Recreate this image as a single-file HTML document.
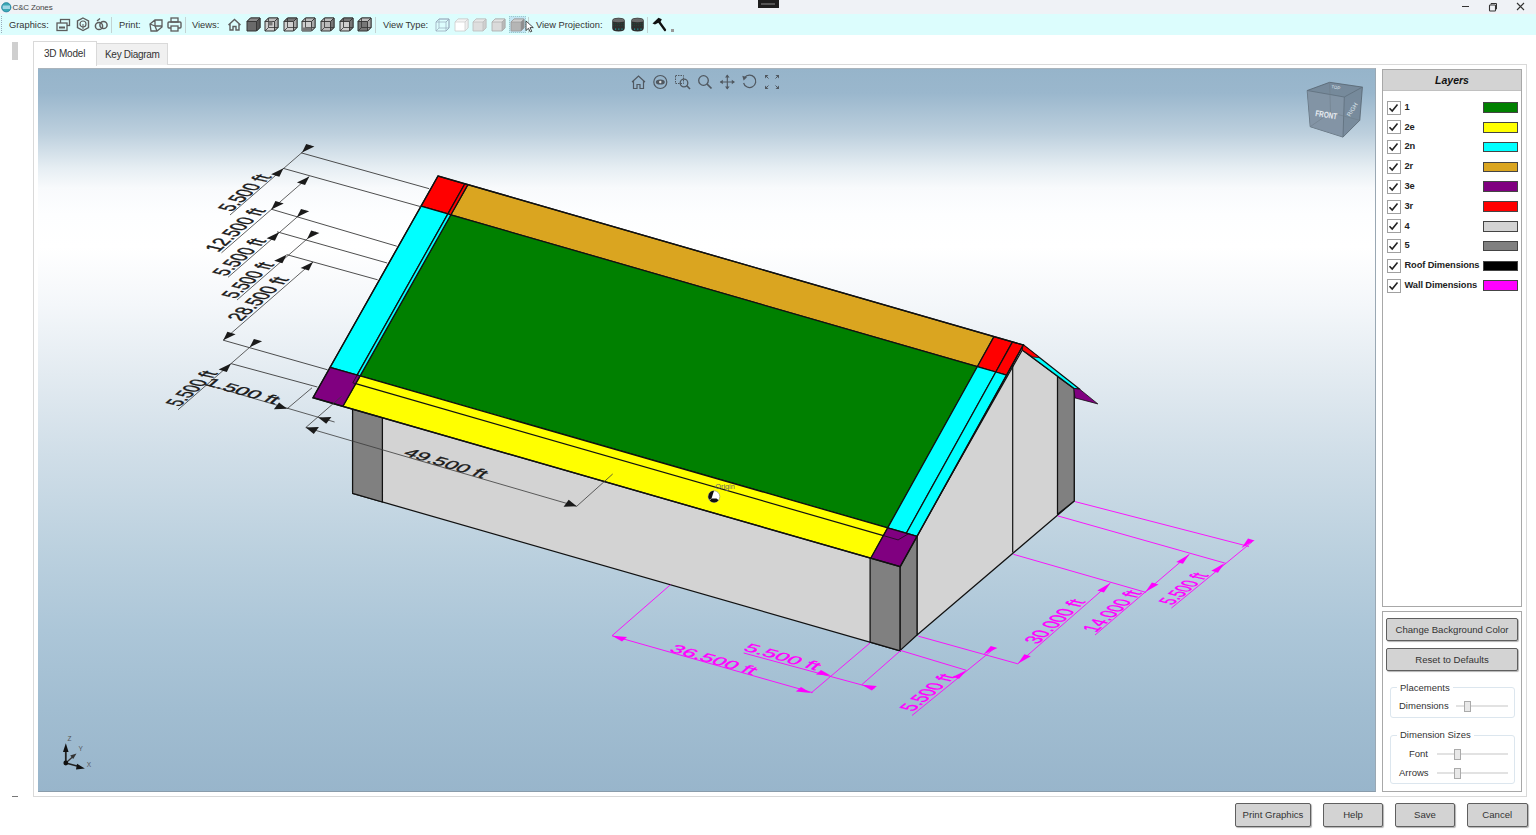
<!DOCTYPE html>
<html><head><meta charset="utf-8"><style>*{box-sizing:border-box;margin:0;padding:0}
html,body{width:1536px;height:835px;overflow:hidden;background:#fff;font-family:"Liberation Sans",sans-serif;color:#222}
body{position:relative}
.a{position:absolute}
.tl{font-size:9.3px;color:#333;top:20.5px;white-space:nowrap;line-height:1}
.btn{background:#d3d3d3;border:1px solid #5f5f5f;border-radius:2px;box-shadow:1px 1px 1px rgba(0,0,0,.3);font-size:9.6px;color:#333;text-align:center;white-space:nowrap}
</style></head><body>
<div class="a" style="left:0;top:0;width:1536px;height:14px;background:#eff2f6"></div>
<svg class="a" style="left:1px;top:2px" width="11" height="11" viewBox="0 0 11 11"><circle cx="5.3" cy="5.3" r="4.8" fill="#3aa9b5"/><rect x="1.5" y="3.5" width="7.5" height="3.5" fill="#9fd6e6"/><circle cx="5.3" cy="5.3" r="4.6" fill="none" stroke="#2a7fa0" stroke-width="0.8"/></svg>
<div class="a" style="left:12.5px;top:2.5px;font-size:8px;color:#444;white-space:nowrap;letter-spacing:-0.15px">C&amp;C Zones</div>
<div class="a" style="left:757.5px;top:0;width:21.5px;height:7.5px;background:#1e1e1e"></div><div class="a" style="left:761px;top:3px;width:14px;height:1.5px;background:#555"></div>
<div class="a" style="left:1462px;top:6px;width:7px;height:1px;background:#333"></div>
<svg class="a" style="left:1488px;top:2px" width="10" height="10" viewBox="0 0 10 10"><path d="M3 2.5V1.5H8.5V7H7.5" fill="none" stroke="#333" stroke-width="1"/><rect x="1.5" y="3" width="6" height="6" rx="0.8" fill="none" stroke="#333" stroke-width="1.1"/></svg>
<svg class="a" style="left:1516px;top:2px" width="9" height="9" viewBox="0 0 9 9"><path d="M1 1L8 8M8 1L1 8" stroke="#333" stroke-width="1.1"/></svg>
<div class="a" style="left:0;top:14px;width:1536px;height:21px;background:#dcfdfd"></div>
<div class="a" style="left:1px;top:16px;width:1px;height:17px;border-left:1px dotted #9ab"></div>
<div class="a tl" style="left:9px">Graphics:</div>
<div class="a tl" style="left:119px">Print:</div>
<div class="a tl" style="left:192px">Views:</div>
<div class="a tl" style="left:383px">View Type:</div>
<div class="a tl" style="left:536px">View Projection:</div>
<div class="a" style="left:111px;top:17px;width:1px;height:16px;background:#c3d3d3"></div>
<div class="a" style="left:185px;top:17px;width:1px;height:16px;background:#c3d3d3"></div>
<div class="a" style="left:375px;top:17px;width:1px;height:16px;background:#c3d3d3"></div>
<div class="a" style="left:528px;top:17px;width:1px;height:16px;background:#c3d3d3"></div>
<div class="a" style="left:647px;top:17px;width:1px;height:16px;background:#c3d3d3"></div>
<svg class="a" style="left:56px;top:18px" width="15" height="14" viewBox="0 0 15 14"><rect x="4.5" y="1.5" width="9" height="6" fill="none" stroke="#5d5d5d" stroke-width="1.3"/><rect x="1" y="5" width="10" height="7.5" fill="#dcfdfd" stroke="#5d5d5d" stroke-width="1.3"/><rect x="3" y="8.5" width="6" height="2" fill="#5d5d5d"/></svg>
<svg class="a" style="left:76px;top:17px" width="14" height="15" viewBox="0 0 14 15"><path d="M7 1L12.5 4V10.5L7 13.5L1.5 10.5V4Z" fill="none" stroke="#5d5d5d" stroke-width="1.4"/><circle cx="7" cy="7" r="3" fill="none" stroke="#5d5d5d" stroke-width="1.2"/><path d="M7 7V12" stroke="#5d5d5d" stroke-width="1"/></svg>
<svg class="a" style="left:94px;top:17px" width="15" height="15" viewBox="0 0 15 15"><circle cx="5" cy="9" r="3.6" fill="none" stroke="#5d5d5d" stroke-width="1.5"/><circle cx="9.5" cy="8" r="3.6" fill="none" stroke="#5d5d5d" stroke-width="1.5"/><path d="M3 4L6 1.5" stroke="#5d5d5d" stroke-width="1.4"/></svg>
<svg class="a" style="left:149px;top:18px" width="14" height="14" viewBox="0 0 14 14"><path d="M1 6L6 2H13V9L8 13H2Z M6 2V8H13 M1 6L6 8 M6 8L8 13" fill="none" stroke="#5d5d5d" stroke-width="1.3"/></svg>
<svg class="a" style="left:167px;top:17px" width="15" height="15" viewBox="0 0 15 15"><rect x="4" y="1" width="7" height="4" fill="none" stroke="#5d5d5d" stroke-width="1.3"/><rect x="1" y="5" width="13" height="6" rx="1" fill="none" stroke="#5d5d5d" stroke-width="1.4"/><rect x="4" y="9" width="7" height="5" fill="#dcfdfd" stroke="#5d5d5d" stroke-width="1.3"/></svg>
<svg class="a" style="left:227px;top:18px" width="15" height="13" viewBox="0 0 15 13"><path d="M1.5 7L7.5 1.5L13.5 7 M3 6V12H6V8.5H9V12H12V6" fill="none" stroke="#5d5d5d" stroke-width="1.4"/></svg>
<svg class="a" style="left:246px;top:17px" width="15" height="15" viewBox="0 0 15 15"><path d="M1 4.5L4.5 1H14V10.5L10.5 14H1Z" fill="#6a6a6a" stroke="#333" stroke-width="1"/><path d="M1 4.5L4.5 1H14L10.5 4.5Z" fill="#8a8a8a" stroke="#333" stroke-width="0.9"/><path d="M10.5 4.5L14 1V10.5L10.5 14Z" fill="#555" stroke="#333" stroke-width="0.9"/></svg>
<svg class="a" style="left:264px;top:17px" width="15" height="15" viewBox="0 0 15 15"><path d="M1 4.5L4.5 1H14V10.5L10.5 14H1Z" fill="#cfcfcf" stroke="#333" stroke-width="1"/><path d="M1 4.5L4.5 1H14L10.5 4.5Z" fill="#bdbdbd" stroke="#333" stroke-width="0.9"/><path d="M10.5 4.5L14 1V10.5L10.5 14Z" fill="#a8a8a8" stroke="#333" stroke-width="0.9"/><path d="M4.5 1V10.5H14 M4.5 10.5L1 14" fill="none" stroke="#333" stroke-width="0.8"/><rect x="4.5" y="4.5" width="4" height="4" fill="#777"/></svg>
<svg class="a" style="left:282.5px;top:17px" width="15" height="15" viewBox="0 0 15 15"><path d="M1 4.5L4.5 1H14V10.5L10.5 14H1Z" fill="#cfcfcf" stroke="#333" stroke-width="1"/><path d="M1 4.5L4.5 1H14L10.5 4.5Z" fill="#777" stroke="#333" stroke-width="0.9"/><path d="M10.5 4.5L14 1V10.5L10.5 14Z" fill="#a8a8a8" stroke="#333" stroke-width="0.9"/><path d="M4.5 1V10.5H14 M4.5 10.5L1 14" fill="none" stroke="#333" stroke-width="0.8"/></svg>
<svg class="a" style="left:301px;top:17px" width="15" height="15" viewBox="0 0 15 15"><path d="M1 4.5L4.5 1H14V10.5L10.5 14H1Z" fill="#cfcfcf" stroke="#333" stroke-width="1"/><path d="M1 4.5L4.5 1H14L10.5 4.5Z" fill="#bdbdbd" stroke="#333" stroke-width="0.9"/><path d="M10.5 4.5L14 1V10.5L10.5 14Z" fill="#a8a8a8" stroke="#333" stroke-width="0.9"/><path d="M4.5 1V10.5H14 M4.5 10.5L1 14" fill="none" stroke="#333" stroke-width="0.8"/><rect x="1" y="10.5" width="9.5" height="3.5" fill="#777"/></svg>
<svg class="a" style="left:320px;top:17px" width="15" height="15" viewBox="0 0 15 15"><path d="M1 4.5L4.5 1H14V10.5L10.5 14H1Z" fill="#bbb" stroke="#333" stroke-width="1"/><path d="M1 4.5L4.5 1H14L10.5 4.5Z" fill="#bdbdbd" stroke="#333" stroke-width="0.9"/><path d="M10.5 4.5L14 1V10.5L10.5 14Z" fill="#777" stroke="#333" stroke-width="0.9"/><path d="M4.5 1V10.5H14 M4.5 10.5L1 14" fill="none" stroke="#333" stroke-width="0.8"/></svg>
<svg class="a" style="left:338.5px;top:17px" width="15" height="15" viewBox="0 0 15 15"><path d="M1 4.5L4.5 1H14V10.5L10.5 14H1Z" fill="#cfcfcf" stroke="#333" stroke-width="1"/><path d="M1 4.5L4.5 1H14L10.5 4.5Z" fill="#777" stroke="#333" stroke-width="0.9"/><path d="M10.5 4.5L14 1V10.5L10.5 14Z" fill="#777" stroke="#333" stroke-width="0.9"/><path d="M4.5 1V10.5H14 M4.5 10.5L1 14" fill="none" stroke="#333" stroke-width="0.8"/></svg>
<svg class="a" style="left:357px;top:17px" width="15" height="15" viewBox="0 0 15 15"><path d="M1 4.5L4.5 1H14V10.5L10.5 14H1Z" fill="#777" stroke="#333" stroke-width="1"/><path d="M1 4.5L4.5 1H14L10.5 4.5Z" fill="#bdbdbd" stroke="#333" stroke-width="0.9"/><path d="M10.5 4.5L14 1V10.5L10.5 14Z" fill="#a8a8a8" stroke="#333" stroke-width="0.9"/><path d="M4.5 1V10.5H14 M4.5 10.5L1 14" fill="none" stroke="#333" stroke-width="0.8"/></svg>
<div class="a" style="left:509px;top:16px;width:17px;height:17px;background:#c4e6f5;border:1px dotted #9cc"></div>
<svg class="a" style="left:435px;top:18px" width="15" height="14" viewBox="0 0 15 14"><path d="M1 4L4 1H14V10L11 13H1Z" fill="none" stroke="#9ab" stroke-width="0.8"/><path d="M1 4L4 1H14L11 4Z" fill="none" stroke="#9ab" stroke-width="0.7"/><path d="M11 4L14 1V10L11 13Z" fill="none" stroke="#9ab" stroke-width="0.7"/></svg>
<svg class="a" style="left:435px;top:18px" width="15" height="14"><path d="M4 1V10H14M4 10L1 13" fill="none" stroke="#9ab" stroke-width="0.7"/></svg>
<svg class="a" style="left:454px;top:18px" width="15" height="14" viewBox="0 0 15 14"><path d="M1 4L4 1H14V10L11 13H1Z" fill="#fff" stroke="#ccc" stroke-width="0.8"/><path d="M1 4L4 1H14L11 4Z" fill="#f4f4f4" stroke="#ccc" stroke-width="0.7"/><path d="M11 4L14 1V10L11 13Z" fill="#eee" stroke="#ccc" stroke-width="0.7"/></svg>
<svg class="a" style="left:472px;top:18px" width="15" height="14" viewBox="0 0 15 14"><path d="M1 4L4 1H14V10L11 13H1Z" fill="#dedede" stroke="#bbb" stroke-width="0.8"/><path d="M1 4L4 1H14L11 4Z" fill="#e8e8e8" stroke="#bbb" stroke-width="0.7"/><path d="M11 4L14 1V10L11 13Z" fill="#cfcfcf" stroke="#bbb" stroke-width="0.7"/></svg>
<svg class="a" style="left:491px;top:18px" width="15" height="14" viewBox="0 0 15 14"><path d="M1 4L4 1H14V10L11 13H1Z" fill="#dadada" stroke="#aaa" stroke-width="0.8"/><path d="M1 4L4 1H14L11 4Z" fill="#e4e4e4" stroke="#aaa" stroke-width="0.7"/><path d="M11 4L14 1V10L11 13Z" fill="#b9b9b9" stroke="#aaa" stroke-width="0.7"/></svg>
<svg class="a" style="left:510px;top:18px" width="15" height="14" viewBox="0 0 15 14"><path d="M1 4L4 1H14V10L11 13H1Z" fill="#b5b5b5" stroke="#999" stroke-width="0.8"/><path d="M1 4L4 1H14L11 4Z" fill="#cfcfcf" stroke="#999" stroke-width="0.7"/><path d="M11 4L14 1V10L11 13Z" fill="#8d8d8d" stroke="#999" stroke-width="0.7"/></svg>
<svg class="a" style="left:525px;top:20px" width="9" height="13" viewBox="0 0 9 13"><path d="M1 1V10.5L3.5 8.3L5.3 12L6.8 11.3L5 7.6H8.3Z" fill="#fff" stroke="#222" stroke-width="0.8"/></svg>
<svg class="a" style="left:611px;top:16.5px" width="15" height="15" viewBox="0 0 15 15"><path d="M1.2 4Q1.2 0.8 7.5 0.8Q13.8 0.8 13.8 4V11Q13.8 14.5 7.5 14.5Q1.2 14.5 1.2 11Z" fill="#2e2e2e"/><path d="M1.5 4.5Q1.5 1.2 7.5 1.2Q13.5 1.2 13.5 4.5Q7.5 6 1.5 4.5Z" fill="#6a6a6a"/><path d="M2 6.5H13M2 8.5H13" stroke="#1d4a3a" stroke-width="0.8" stroke-dasharray="1 1"/><path d="M4 12.2H12" stroke="#1a9a9a" stroke-width="1.2" stroke-dasharray="1.2 2"/></svg>
<svg class="a" style="left:630px;top:16.5px" width="15" height="15" viewBox="0 0 15 15"><path d="M1.2 4Q1.2 0.8 7.5 0.8Q13.8 0.8 13.8 4V11Q13.8 14.5 7.5 14.5Q1.2 14.5 1.2 11Z" fill="#2e2e2e"/><path d="M1.5 4.5Q1.5 1.2 7.5 1.2Q13.5 1.2 13.5 4.5Q7.5 6 1.5 4.5Z" fill="#6a6a6a"/><path d="M2 6.5H13M2 8.5H13" stroke="#1d4a3a" stroke-width="0.8" stroke-dasharray="1 1"/><path d="M4 12.2H12" stroke="#1a9a9a" stroke-width="1.2" stroke-dasharray="1.2 2"/></svg>
<svg class="a" style="left:652px;top:17px" width="15" height="15" viewBox="0 0 15 15"><path d="M0.5 6.5L6.5 0.8L9.8 2.2L8.8 4.5L3 7.5Z" fill="#111"/><path d="M6.5 4L13 13" stroke="#111" stroke-width="2.3" stroke-linecap="round"/></svg>
<div class="a" style="left:671px;top:29px;width:3px;height:3px;background:#999"></div>
<div class="a" style="left:12px;top:42px;width:6px;height:18px;background:#cfcfcf"></div>
<div class="a" style="left:12px;top:796px;width:6px;height:1px;background:#777"></div>
<div class="a" style="left:33px;top:64px;width:1494px;height:733px;border:1px solid #d9d9d9;background:#fff"></div>
<div class="a" style="left:96px;top:43px;width:72px;height:22px;background:#f0f0f0;border:1px solid #d9d9d9;border-bottom:none"></div>
<div class="a" style="left:33px;top:41px;width:64px;height:25px;background:#fff;border:1px solid #d9d9d9;border-bottom:none"></div>
<div class="a" style="left:44px;top:48px;font-size:10px;color:#333;white-space:nowrap;letter-spacing:-0.2px">3D Model</div>
<div class="a" style="left:105px;top:49px;font-size:10px;color:#333;white-space:nowrap;letter-spacing:-0.3px">Key Diagram</div>
<div class="a" style="left:1382px;top:69px;width:140px;height:538px;border:1px solid #a8a8a8;background:#fff"></div>
<div class="a" style="left:1383px;top:70px;width:138px;height:21px;background:#d3d3d3;border-bottom:1px solid #c0c0c0"></div>
<div class="a" style="left:1383px;top:74px;width:138px;text-align:center;font-size:10.5px;font-weight:bold;font-style:italic;color:#111">Layers</div>
<div class="a" style="left:1386.5px;top:100.5px;width:14px;height:14px;border:1px solid #a0a0a0;background:#fff"></div>
<svg class="a" style="left:1388px;top:102.5px" width="11" height="10" viewBox="0 0 11 10"><path d="M1.5 5.2L4.2 8L9.5 1.5" fill="none" stroke="#222" stroke-width="1.6"/></svg>
<div class="a" style="left:1404.5px;top:101.7px;font-size:9.3px;color:#222;white-space:nowrap;font-weight:bold;letter-spacing:-0.1px">1</div>
<div class="a" style="left:1482.5px;top:102.2px;width:35px;height:10.5px;background:#008000;border:1px solid #444"></div>
<div class="a" style="left:1386.5px;top:120.3px;width:14px;height:14px;border:1px solid #a0a0a0;background:#fff"></div>
<svg class="a" style="left:1388px;top:122.3px" width="11" height="10" viewBox="0 0 11 10"><path d="M1.5 5.2L4.2 8L9.5 1.5" fill="none" stroke="#222" stroke-width="1.6"/></svg>
<div class="a" style="left:1404.5px;top:121.5px;font-size:9.3px;color:#222;white-space:nowrap;font-weight:bold;letter-spacing:-0.1px">2e</div>
<div class="a" style="left:1482.5px;top:122.0px;width:35px;height:10.5px;background:#ffff00;border:1px solid #444"></div>
<div class="a" style="left:1386.5px;top:140.1px;width:14px;height:14px;border:1px solid #a0a0a0;background:#fff"></div>
<svg class="a" style="left:1388px;top:142.1px" width="11" height="10" viewBox="0 0 11 10"><path d="M1.5 5.2L4.2 8L9.5 1.5" fill="none" stroke="#222" stroke-width="1.6"/></svg>
<div class="a" style="left:1404.5px;top:141.3px;font-size:9.3px;color:#222;white-space:nowrap;font-weight:bold;letter-spacing:-0.1px">2n</div>
<div class="a" style="left:1482.5px;top:141.8px;width:35px;height:10.5px;background:#00ffff;border:1px solid #444"></div>
<div class="a" style="left:1386.5px;top:159.9px;width:14px;height:14px;border:1px solid #a0a0a0;background:#fff"></div>
<svg class="a" style="left:1388px;top:161.9px" width="11" height="10" viewBox="0 0 11 10"><path d="M1.5 5.2L4.2 8L9.5 1.5" fill="none" stroke="#222" stroke-width="1.6"/></svg>
<div class="a" style="left:1404.5px;top:161.1px;font-size:9.3px;color:#222;white-space:nowrap;font-weight:bold;letter-spacing:-0.1px">2r</div>
<div class="a" style="left:1482.5px;top:161.6px;width:35px;height:10.5px;background:#daa520;border:1px solid #444"></div>
<div class="a" style="left:1386.5px;top:179.7px;width:14px;height:14px;border:1px solid #a0a0a0;background:#fff"></div>
<svg class="a" style="left:1388px;top:181.7px" width="11" height="10" viewBox="0 0 11 10"><path d="M1.5 5.2L4.2 8L9.5 1.5" fill="none" stroke="#222" stroke-width="1.6"/></svg>
<div class="a" style="left:1404.5px;top:180.9px;font-size:9.3px;color:#222;white-space:nowrap;font-weight:bold;letter-spacing:-0.1px">3e</div>
<div class="a" style="left:1482.5px;top:181.4px;width:35px;height:10.5px;background:#800080;border:1px solid #444"></div>
<div class="a" style="left:1386.5px;top:199.5px;width:14px;height:14px;border:1px solid #a0a0a0;background:#fff"></div>
<svg class="a" style="left:1388px;top:201.5px" width="11" height="10" viewBox="0 0 11 10"><path d="M1.5 5.2L4.2 8L9.5 1.5" fill="none" stroke="#222" stroke-width="1.6"/></svg>
<div class="a" style="left:1404.5px;top:200.7px;font-size:9.3px;color:#222;white-space:nowrap;font-weight:bold;letter-spacing:-0.1px">3r</div>
<div class="a" style="left:1482.5px;top:201.2px;width:35px;height:10.5px;background:#ff0000;border:1px solid #444"></div>
<div class="a" style="left:1386.5px;top:219.3px;width:14px;height:14px;border:1px solid #a0a0a0;background:#fff"></div>
<svg class="a" style="left:1388px;top:221.3px" width="11" height="10" viewBox="0 0 11 10"><path d="M1.5 5.2L4.2 8L9.5 1.5" fill="none" stroke="#222" stroke-width="1.6"/></svg>
<div class="a" style="left:1404.5px;top:220.5px;font-size:9.3px;color:#222;white-space:nowrap;font-weight:bold;letter-spacing:-0.1px">4</div>
<div class="a" style="left:1482.5px;top:221.0px;width:35px;height:10.5px;background:#d3d3d3;border:1px solid #444"></div>
<div class="a" style="left:1386.5px;top:239.1px;width:14px;height:14px;border:1px solid #a0a0a0;background:#fff"></div>
<svg class="a" style="left:1388px;top:241.1px" width="11" height="10" viewBox="0 0 11 10"><path d="M1.5 5.2L4.2 8L9.5 1.5" fill="none" stroke="#222" stroke-width="1.6"/></svg>
<div class="a" style="left:1404.5px;top:240.3px;font-size:9.3px;color:#222;white-space:nowrap;font-weight:bold;letter-spacing:-0.1px">5</div>
<div class="a" style="left:1482.5px;top:240.8px;width:35px;height:10.5px;background:#808080;border:1px solid #444"></div>
<div class="a" style="left:1386.5px;top:258.9px;width:14px;height:14px;border:1px solid #a0a0a0;background:#fff"></div>
<svg class="a" style="left:1388px;top:260.9px" width="11" height="10" viewBox="0 0 11 10"><path d="M1.5 5.2L4.2 8L9.5 1.5" fill="none" stroke="#222" stroke-width="1.6"/></svg>
<div class="a" style="left:1404.5px;top:260.1px;font-size:9.3px;color:#222;white-space:nowrap;font-weight:bold;letter-spacing:-0.1px">Roof Dimensions</div>
<div class="a" style="left:1482.5px;top:260.6px;width:35px;height:10.5px;background:#000000;border:1px solid #444"></div>
<div class="a" style="left:1386.5px;top:278.7px;width:14px;height:14px;border:1px solid #a0a0a0;background:#fff"></div>
<svg class="a" style="left:1388px;top:280.7px" width="11" height="10" viewBox="0 0 11 10"><path d="M1.5 5.2L4.2 8L9.5 1.5" fill="none" stroke="#222" stroke-width="1.6"/></svg>
<div class="a" style="left:1404.5px;top:279.9px;font-size:9.3px;color:#222;white-space:nowrap;font-weight:bold;letter-spacing:-0.1px">Wall Dimensions</div>
<div class="a" style="left:1482.5px;top:280.4px;width:35px;height:10.5px;background:#ff00ff;border:1px solid #444"></div>
<div class="a" style="left:1382px;top:611px;width:140px;height:181px;border:1px solid #a8a8a8;background:#fff"></div>
<div class="a btn" style="left:1386px;top:618px;width:132px;height:23px;line-height:21px">Change Background Color</div>
<div class="a btn" style="left:1386px;top:648px;width:132px;height:23px;line-height:21px">Reset to Defaults</div>
<div class="a" style="left:1389.5px;top:687px;width:125px;height:31px;border:1px solid #dce6ee;border-radius:3px"></div>
<div class="a" style="left:1397px;top:682px;padding:0 3px;background:#fff;font-size:9.5px;color:#333">Placements</div>
<div class="a" style="left:1399px;top:700px;font-size:9.5px;color:#333">Dimensions</div>
<div class="a" style="left:1389.5px;top:735px;width:125px;height:49px;border:1px solid #dce6ee;border-radius:3px"></div>
<div class="a" style="left:1397px;top:729px;padding:0 3px;background:#fff;font-size:9.5px;color:#333">Dimension Sizes</div>
<div class="a" style="left:1409px;top:747.5px;font-size:9.5px;color:#333">Font</div>
<div class="a" style="left:1399px;top:766.5px;font-size:9.5px;color:#333">Arrows</div>
<div class="a" style="left:1456px;top:705px;width:52px;height:2px;background:#e2e2e2"></div>
<div class="a" style="left:1464px;top:701px;width:7px;height:11px;background:#e8e8e8;border:1px solid #aaa"></div>
<div class="a" style="left:1437px;top:752.5px;width:71px;height:2px;background:#e2e2e2"></div>
<div class="a" style="left:1454px;top:748.5px;width:7px;height:11px;background:#e8e8e8;border:1px solid #aaa"></div>
<div class="a" style="left:1437px;top:771.5px;width:71px;height:2px;background:#e2e2e2"></div>
<div class="a" style="left:1454px;top:767.5px;width:7px;height:11px;background:#e8e8e8;border:1px solid #aaa"></div>
<div class="a btn" style="left:1235px;top:803px;width:76px;height:24px;line-height:22px">Print Graphics</div>
<div class="a btn" style="left:1323px;top:803px;width:60px;height:24px;line-height:22px">Help</div>
<div class="a btn" style="left:1395px;top:803px;width:60px;height:24px;line-height:22px">Save</div>
<div class="a btn" style="left:1467px;top:803px;width:60.5px;height:24px;line-height:22px">Cancel</div>
<div class="a" style="left:38px;top:68px;width:1338px;height:724px;background:linear-gradient(180deg,#96b4ca 0px,#9ab7cd 24px,#bccfdd 64px,#e6eef3 99px,#f8fafc 119px,#fdfeff 145px,#ffffff 178px,#f4f7fa 235px,#e3ebf1 305px,#d0dee8 385px,#bcd1df 478px,#acc6d8 562px,#a1bdd1 640px,#98b5cb 724px);border-top:1px solid #aab4bc;border-bottom:1px solid #8a9cab;border-right:1px solid #9aa8b3"></div>
<svg class="a" style="left:0;top:0" width="1536" height="835" viewBox="0 0 1536 835">
<defs><clipPath id="vpc"><rect x="38" y="68" width="1338" height="724"/></clipPath></defs>
<g clip-path="url(#vpc)">
<polygon points="352.6,406.0 900.2,563.4 900.2,650.8 352.6,493.4" fill="#d3d3d3" stroke="#111" stroke-width="1.25" stroke-linejoin="round"/>
<polygon points="352.6,406.0 382.4,414.6 382.4,502.0 352.6,493.4" fill="#808080" stroke="#111" stroke-width="1.25" stroke-linejoin="round"/>
<polygon points="870.1,554.8 900.2,563.4 900.2,650.8 870.1,642.2" fill="#808080" stroke="#111" stroke-width="1.25" stroke-linejoin="round"/>
<polygon points="917.0,535.4 917.0,635.0 1074.2,501.0 1074.2,388.7 1022.3,350.0" fill="#d3d3d3" stroke="#111" stroke-width="1.25" stroke-linejoin="round"/>
<polygon points="1057.5,376.5 1057.5,514.3 1074.2,501.0 1074.2,388.7" fill="#808080" stroke="#111" stroke-width="1.25" stroke-linejoin="round"/>
<line x1="1012.7" y1="360.0" x2="1012.7" y2="552.6" stroke="#111" stroke-width="1.2"/>
<polygon points="900.2,560.0 900.2,650.4 917.0,635.0 917.0,533.0" fill="#808080" stroke="#111" stroke-width="1.25" stroke-linejoin="round"/>
<polygon points="1022.9,344.6 1079.8,389.3 1073.8,388.3 1022.3,350.0" fill="#00ffff" stroke="#111" stroke-width="1.25" stroke-linejoin="round"/>
<polygon points="1022.9,344.6 1039.7,357.7 1033.0,357.0 1022.3,350.0" fill="#ff0000" stroke="#111" stroke-width="0.8" stroke-linejoin="round"/>
<polygon points="1073.8,388.3 1079.8,389.3 1097.8,403.9 1075.0,397.9" fill="#800080" stroke="#111" stroke-width="0.8" stroke-linejoin="round"/>
<polygon points="467.9,184.6 994.0,336.6 977.3,366.7 450.9,214.8" fill="#daa520" stroke="#111" stroke-width="1.25" stroke-linejoin="round"/>
<polygon points="450.9,214.8 977.3,366.7 887.7,527.9 360.1,375.9" fill="#008000" stroke="#111" stroke-width="1.25" stroke-linejoin="round"/>
<polygon points="360.1,375.9 887.7,527.9 870.8,558.2 342.9,406.3" fill="#ffff00" stroke="#111" stroke-width="1.25" stroke-linejoin="round"/>
<line x1="355.7" y1="383.7" x2="883.4" y2="535.6" stroke="#111" stroke-width="1.2"/>
<polygon points="438.0,176.0 464.9,183.8 447.9,213.9 421.0,206.2" fill="#ff0000" stroke="#111" stroke-width="1.25" stroke-linejoin="round"/>
<polygon points="421.0,206.2 447.9,213.9 357.1,375.1 330.1,367.3" fill="#00ffff" stroke="#111" stroke-width="1.25" stroke-linejoin="round"/>
<polygon points="464.9,183.8 467.9,184.6 450.9,214.8 447.9,213.9" fill="#ff0000" stroke="#111" stroke-width="1.25" stroke-linejoin="round"/>
<polygon points="447.9,213.9 450.9,214.8 360.1,375.9 357.1,375.1" fill="#00ffff" stroke="#111" stroke-width="1.25" stroke-linejoin="round"/>
<polygon points="994.0,336.6 1012.5,341.9 995.8,372.0 977.3,366.7" fill="#ff0000" stroke="#111" stroke-width="1.25" stroke-linejoin="round"/>
<polygon points="977.3,366.7 995.8,372.0 906.3,533.2 887.7,527.9" fill="#00ffff" stroke="#111" stroke-width="1.25" stroke-linejoin="round"/>
<polygon points="1012.5,341.9 1023.3,345.0 1006.6,375.2 995.8,372.0" fill="#ff0000" stroke="#111" stroke-width="1.25" stroke-linejoin="round"/>
<polygon points="995.8,372.0 1006.6,375.2 917.1,536.3 906.3,533.2" fill="#00ffff" stroke="#111" stroke-width="1.25" stroke-linejoin="round"/>
<polygon points="330.1,367.3 360.1,375.9 342.9,406.3 313.0,397.7" fill="#800080" stroke="#111" stroke-width="1.25" stroke-linejoin="round"/>
<polygon points="887.7,527.9 917.1,536.3 900.2,566.7 870.8,558.2" fill="#800080" stroke="#111" stroke-width="1.25" stroke-linejoin="round"/>
<polyline points="355.7,383.7 352.8,382.9 357.1,375.1" fill="none" stroke="#111" stroke-width="0.8"/>
<polyline points="883.4,535.6 898.1,539.9 908.3,533.8" fill="none" stroke="#111" stroke-width="0.8"/>
<polygon points="438.0,176.0 1023.3,345.0 900.2,566.7 313.0,397.7" fill="none" stroke="#111" stroke-width="1.4"/>
<circle cx="714" cy="496.6" r="5.8" fill="#fff" stroke="#888" stroke-width="0.6"/>
<path d="M714 490.8A5.8 5.8 0 0 0 709.2 499.8L711.5 498.5Z" fill="#111"/>
<path d="M709.6 500.6A5.8 5.8 0 0 0 718.6 500.3L716.5 498.5H711.5Z" fill="#111"/>
<text x="715.3" y="488.5" font-size="7" fill="#6a6a6a" font-family="Liberation Sans" textLength="19.5" lengthAdjust="spacingAndGlyphs">Origin</text>
<line x1="429.2" y1="188.7" x2="301.0" y2="152.8" stroke="#3a3a3a" stroke-width="0.9"/>
<line x1="420.8" y1="206.7" x2="283.0" y2="168.3" stroke="#3a3a3a" stroke-width="0.9"/>
<line x1="396.8" y1="246.2" x2="271.0" y2="209.1" stroke="#3a3a3a" stroke-width="0.9"/>
<line x1="387.2" y1="263.0" x2="277.0" y2="231.8" stroke="#3a3a3a" stroke-width="0.9"/>
<line x1="377.7" y1="279.8" x2="286.6" y2="254.6" stroke="#3a3a3a" stroke-width="0.9"/>
<line x1="327.6" y1="369.8" x2="223.2" y2="340.2" stroke="#3a3a3a" stroke-width="0.9"/>
<line x1="317.4" y1="387.0" x2="231.0" y2="363.6" stroke="#3a3a3a" stroke-width="0.9"/>
<line x1="310.3" y1="145.3" x2="230.0" y2="215.0" stroke="#3a3a3a" stroke-width="0.8"/>
<polygon points="302.0,152.5 314.4,146.5 306.2,144.1" fill="#1a1a1a"/>
<polygon points="283.5,168.3 279.3,176.7 271.1,174.3" fill="#1a1a1a"/>
<text transform="matrix(0.7532,-0.6578,1.5084,0.3403,231.51,212.10)" font-family="Liberation Sans" font-size="14" fill="#1a1a1a" stroke="#1a1a1a" stroke-width="0.35" textLength="53.5" lengthAdjust="spacingAndGlyphs">5.500 ft</text>
<line x1="309.3" y1="176.5" x2="221.5" y2="252.8" stroke="#3a3a3a" stroke-width="0.8"/>
<polygon points="309.3,176.5 305.1,184.9 296.9,182.5" fill="#1a1a1a"/>
<polygon points="271.3,209.5 283.7,203.4 275.4,201.0" fill="#1a1a1a"/>
<text transform="matrix(0.7526,-0.6585,1.5084,0.3403,218.21,252.60)" font-family="Liberation Sans" font-size="14" fill="#1a1a1a" stroke="#1a1a1a" stroke-width="0.35" textLength="63.8" lengthAdjust="spacingAndGlyphs">12.500 ft</text>
<line x1="305.1" y1="210.1" x2="228.0" y2="277.3" stroke="#3a3a3a" stroke-width="0.8"/>
<polygon points="296.8,217.3 309.2,211.3 301.0,208.9" fill="#1a1a1a"/>
<polygon points="279.0,232.2 274.9,240.7 266.6,238.3" fill="#1a1a1a"/>
<text transform="matrix(0.7534,-0.6576,1.5084,0.3403,225.81,276.60)" font-family="Liberation Sans" font-size="14" fill="#1a1a1a" stroke="#1a1a1a" stroke-width="0.35" textLength="54.3" lengthAdjust="spacingAndGlyphs">5.500 ft</text>
<line x1="315.3" y1="231.8" x2="237.0" y2="300.0" stroke="#3a3a3a" stroke-width="0.8"/>
<polygon points="307.0,239.0 319.4,233.0 311.2,230.6" fill="#1a1a1a"/>
<polygon points="286.6,254.8 282.4,263.2 274.2,260.8" fill="#1a1a1a"/>
<text transform="matrix(0.7540,-0.6569,1.5084,0.3403,235.01,299.10)" font-family="Liberation Sans" font-size="14" fill="#1a1a1a" stroke="#1a1a1a" stroke-width="0.35" textLength="52.5" lengthAdjust="spacingAndGlyphs">5.500 ft</text>
<line x1="313.0" y1="262.0" x2="223.2" y2="340.2" stroke="#3a3a3a" stroke-width="0.8"/>
<polygon points="313.0,262.0 308.8,270.4 300.6,268.0" fill="#1a1a1a"/>
<polygon points="223.2,340.2 235.6,334.2 227.4,331.8" fill="#1a1a1a"/>
<text transform="matrix(0.7536,-0.6573,1.5084,0.3403,240.86,321.62)" font-family="Liberation Sans" font-size="14" fill="#1a1a1a" stroke="#1a1a1a" stroke-width="0.35" textLength="64.4" lengthAdjust="spacingAndGlyphs">28.500 ft</text>
<line x1="258.0" y1="340.1" x2="178.0" y2="409.8" stroke="#3a3a3a" stroke-width="0.8"/>
<polygon points="249.7,347.3 262.1,341.3 253.9,338.9" fill="#1a1a1a"/>
<polygon points="231.0,363.6 226.8,372.0 218.6,369.6" fill="#1a1a1a"/>
<text transform="matrix(0.7538,-0.6571,1.5084,0.3403,179.21,407.10)" font-family="Liberation Sans" font-size="14" fill="#1a1a1a" stroke="#1a1a1a" stroke-width="0.35" textLength="51.7" lengthAdjust="spacingAndGlyphs">5.500 ft</text>
<line x1="287.1" y1="408.8" x2="312.0" y2="387.8" stroke="#3a3a3a" stroke-width="0.8"/>
<line x1="305.8" y1="427.5" x2="341.6" y2="396.3" stroke="#3a3a3a" stroke-width="0.8"/>
<line x1="209.2" y1="385.4" x2="334.6" y2="422.0" stroke="#3a3a3a" stroke-width="0.8"/>
<polygon points="287.1,408.8 279.1,402.4 273.9,409.2" fill="#1a1a1a"/>
<polygon points="318.2,417.4 331.4,417.0 326.2,423.8" fill="#1a1a1a"/>
<text transform="matrix(0.9636,0.2674,-0.8088,0.7118,203.27,384.54)" font-family="Liberation Sans" font-size="14" fill="#1a1a1a" stroke="#1a1a1a" stroke-width="0.35" textLength="73.7" lengthAdjust="spacingAndGlyphs">1.500 ft</text>
<line x1="305.8" y1="427.5" x2="576.7" y2="506.3" stroke="#3a3a3a" stroke-width="0.8"/>
<line x1="576.7" y1="506.3" x2="612.7" y2="474.0" stroke="#3a3a3a" stroke-width="0.8"/>
<polygon points="305.8,427.5 318.9,427.1 313.8,434.0" fill="#1a1a1a"/>
<polygon points="576.7,506.3 568.7,499.8 563.6,506.7" fill="#1a1a1a"/>
<text transform="matrix(0.9601,0.2796,-0.8238,0.7250,402.28,455.04)" font-family="Liberation Sans" font-size="14" fill="#1a1a1a" stroke="#1a1a1a" stroke-width="0.35" textLength="83.3" lengthAdjust="spacingAndGlyphs">49.500 ft</text>
<line x1="670.4" y1="584.8" x2="612.0" y2="635.7" stroke="#ff00ff" stroke-width="0.9"/>
<line x1="870.0" y1="643.0" x2="811.2" y2="692.9" stroke="#ff00ff" stroke-width="0.9"/>
<line x1="900.7" y1="650.5" x2="861.8" y2="684.7" stroke="#ff00ff" stroke-width="0.9"/>
<line x1="918.5" y1="636.2" x2="1017.8" y2="663.8" stroke="#ff00ff" stroke-width="0.9"/>
<line x1="900.7" y1="650.5" x2="966.4" y2="670.3" stroke="#ff00ff" stroke-width="0.9"/>
<line x1="1075.0" y1="501.6" x2="1249.0" y2="546.5" stroke="#ff00ff" stroke-width="0.9"/>
<line x1="1057.8" y1="515.9" x2="1226.0" y2="563.4" stroke="#ff00ff" stroke-width="0.9"/>
<line x1="1013.4" y1="554.3" x2="1146.0" y2="592.4" stroke="#ff00ff" stroke-width="0.9"/>
<line x1="612.0" y1="635.7" x2="812.6" y2="692.6" stroke="#ff00ff" stroke-width="0.9"/>
<polygon points="612.0,635.7 627.1,637.0 622.0,641.5" fill="#ff00ff"/>
<polygon points="811.0,692.9 801.0,687.1 795.9,691.6" fill="#ff00ff"/>
<text transform="matrix(0.9611,0.2762,-0.8088,0.7118,668.28,651.04)" font-family="Liberation Sans" font-size="14" fill="#ff00ff" stroke="#ff00ff" stroke-width="0.35" textLength="86.9" lengthAdjust="spacingAndGlyphs">36.500 ft</text>
<line x1="743.7" y1="653.0" x2="874.3" y2="688.3" stroke="#ff00ff" stroke-width="0.9"/>
<polygon points="831.0,675.8 821.0,670.0 815.9,674.5" fill="#ff00ff"/>
<polygon points="861.8,684.7 876.9,686.0 871.8,690.5" fill="#ff00ff"/>
<text transform="matrix(0.9634,0.2679,-0.8088,0.7118,742.27,650.04)" font-family="Liberation Sans" font-size="14" fill="#ff00ff" stroke="#ff00ff" stroke-width="0.35" textLength="75.8" lengthAdjust="spacingAndGlyphs">5.500 ft</text>
<line x1="995.1" y1="647.8" x2="912.0" y2="715.5" stroke="#ff00ff" stroke-width="0.9"/>
<polygon points="983.5,654.6 997.4,648.0 990.8,646.1" fill="#ff00ff"/>
<polygon points="966.4,670.3 959.1,678.8 952.5,676.9" fill="#ff00ff"/>
<text transform="matrix(0.7712,-0.6366,1.5084,0.3403,913.05,711.84)" font-family="Liberation Sans" font-size="14" fill="#ff00ff" stroke="#ff00ff" stroke-width="0.35" textLength="55.8" lengthAdjust="spacingAndGlyphs">5.500 ft</text>
<line x1="1017.8" y1="663.8" x2="1110.4" y2="583.0" stroke="#ff00ff" stroke-width="0.9"/>
<polygon points="1017.8,663.8 1030.9,656.2 1024.3,654.3" fill="#ff00ff"/>
<polygon points="1110.4,583.0 1103.9,592.5 1097.3,590.6" fill="#ff00ff"/>
<text transform="matrix(0.7477,-0.6641,1.5084,0.3403,1037.67,644.60)" font-family="Liberation Sans" font-size="14" fill="#ff00ff" stroke="#ff00ff" stroke-width="0.35" textLength="64.6" lengthAdjust="spacingAndGlyphs">30.000 ft</text>
<line x1="1189.4" y1="554.3" x2="1095.0" y2="635.0" stroke="#ff00ff" stroke-width="0.9"/>
<polygon points="1145.4,592.0 1158.5,584.4 1151.9,582.5" fill="#ff00ff"/>
<polygon points="1189.4,554.3 1182.9,563.8 1176.3,561.9" fill="#ff00ff"/>
<text transform="matrix(0.7604,-0.6494,1.5084,0.3403,1095.83,632.66)" font-family="Liberation Sans" font-size="14" fill="#ff00ff" stroke="#ff00ff" stroke-width="0.35" textLength="61.3" lengthAdjust="spacingAndGlyphs">14.000 ft</text>
<line x1="1252.3" y1="541.7" x2="1171.4" y2="608.1" stroke="#ff00ff" stroke-width="0.9"/>
<polygon points="1241.5,548.0 1254.6,540.4 1248.0,538.5" fill="#ff00ff"/>
<polygon points="1224.4,563.2 1217.9,572.7 1211.3,570.8" fill="#ff00ff"/>
<text transform="matrix(0.7739,-0.6334,1.5084,0.3403,1172.15,605.34)" font-family="Liberation Sans" font-size="14" fill="#ff00ff" stroke="#ff00ff" stroke-width="0.35" textLength="47.7" lengthAdjust="spacingAndGlyphs">5.500 ft</text>
<path d="M632 82L638.5 76L645 82M633.5 81V88.5H637V84.5H640V88.5H643.5V81" fill="none" stroke="#505860" stroke-width="1.2"/>
<circle cx="660.3" cy="82" r="6.5" fill="none" stroke="#505860" stroke-width="1.2"/><ellipse cx="660.3" cy="82" rx="4.5" ry="2.6" fill="#505860"/><circle cx="660.3" cy="82" r="1.2" fill="#ddd"/>
<rect x="675.5" y="75.5" width="8" height="8" fill="none" stroke="#505860" stroke-width="1" stroke-dasharray="1.5 1"/><circle cx="684" cy="83" r="3.8" fill="none" stroke="#505860" stroke-width="1.3"/><path d="M686.8 85.8L690 89" stroke="#505860" stroke-width="1.6"/>
<circle cx="703.5" cy="80.5" r="4.8" fill="none" stroke="#505860" stroke-width="1.3"/><path d="M707 84L711.5 88.5" stroke="#505860" stroke-width="1.7"/>
<path d="M727.3 75V89M720.3 82H734.3" stroke="#505860" stroke-width="1.1"/><path d="M727.3 74.5L725 77.5H729.6ZM727.3 89.5L725 86.5H729.6ZM719.8 82L722.8 79.7V84.3ZM734.8 82L731.8 79.7V84.3Z" fill="#505860"/>
<path d="M744.6 77.6A6.2 6.2 0 1 1 743.6 83" fill="none" stroke="#505860" stroke-width="1.2"/><path d="M742.3 75.8L747 77.2L743.6 80.6Z" fill="#505860"/>
<path d="M768.5 78.5L766 76M775.5 78.5L778 76M768.5 85.5L766 88M775.5 85.5L778 88" stroke="#505860" stroke-width="1"/><path d="M765 75H768.5L765 78.5ZM779 75H775.5L779 78.5ZM765 89H768.5L765 85.5ZM779 89H775.5L779 85.5Z" fill="#505860"/>
<polygon points="1329.6,82.3 1362.4,87.1 1359.8,120.3 1343,137.1 1310.2,126.7 1307.2,90.5" fill="#738697" fill-opacity="0.92" stroke="#55636f" stroke-width="0.8"/>
<polygon points="1307.2,90.5 1344.3,97 1343,137.1 1310.2,126.7" fill="#8a9bab" fill-opacity="0.6"/>
<path d="M1307.2,90.5L1344.3,97L1362.4,87.1M1344.3,97L1343,137.1" fill="none" stroke="#5e6e7c" stroke-width="0.8"/>
<path d="M1329.6,82.3L1330.5,112.5L1310.2,126.7M1330.5,112.5L1359.8,120.3" fill="none" stroke="#6e7d8a" stroke-width="0.6"/>
<text transform="translate(1315,116) rotate(9)" font-family="Liberation Sans" font-size="8.5" font-weight="bold" fill="#e6ebf0" textLength="22" lengthAdjust="spacingAndGlyphs">FRONT</text>
<text transform="translate(1350,117) rotate(-58)" font-family="Liberation Sans" font-size="6" fill="#dde4ea">RIGH</text>
<text transform="translate(1331,88) rotate(12)" font-family="Liberation Sans" font-size="4.5" fill="#dde4ea">TOP</text>
<line x1="65.8" y1="763" x2="65.8" y2="750" stroke="#222" stroke-width="1.8"/><polygon points="65.8,743.3 63,752 68.6,752" fill="#111"/>
<line x1="65.8" y1="763" x2="72.5" y2="757" stroke="#333" stroke-width="1.3"/><polygon points="76.5,753.5 70.2,755.5 73.2,759" fill="#333"/>
<line x1="65.8" y1="763" x2="77" y2="766" stroke="#222" stroke-width="1.6"/><polygon points="84.8,768.5 77,763.8 76,769.5" fill="#111"/>
<circle cx="65.8" cy="763" r="2.4" fill="#111"/>
<text x="67.6" y="741" font-family="Liberation Sans" font-size="6.5" fill="#555">Z</text>
<text x="78.6" y="750.5" font-family="Liberation Sans" font-size="6.5" fill="#555">Y</text>
<text x="86.8" y="766.5" font-family="Liberation Sans" font-size="6.5" fill="#555">X</text>
</g></svg>
</body></html>
